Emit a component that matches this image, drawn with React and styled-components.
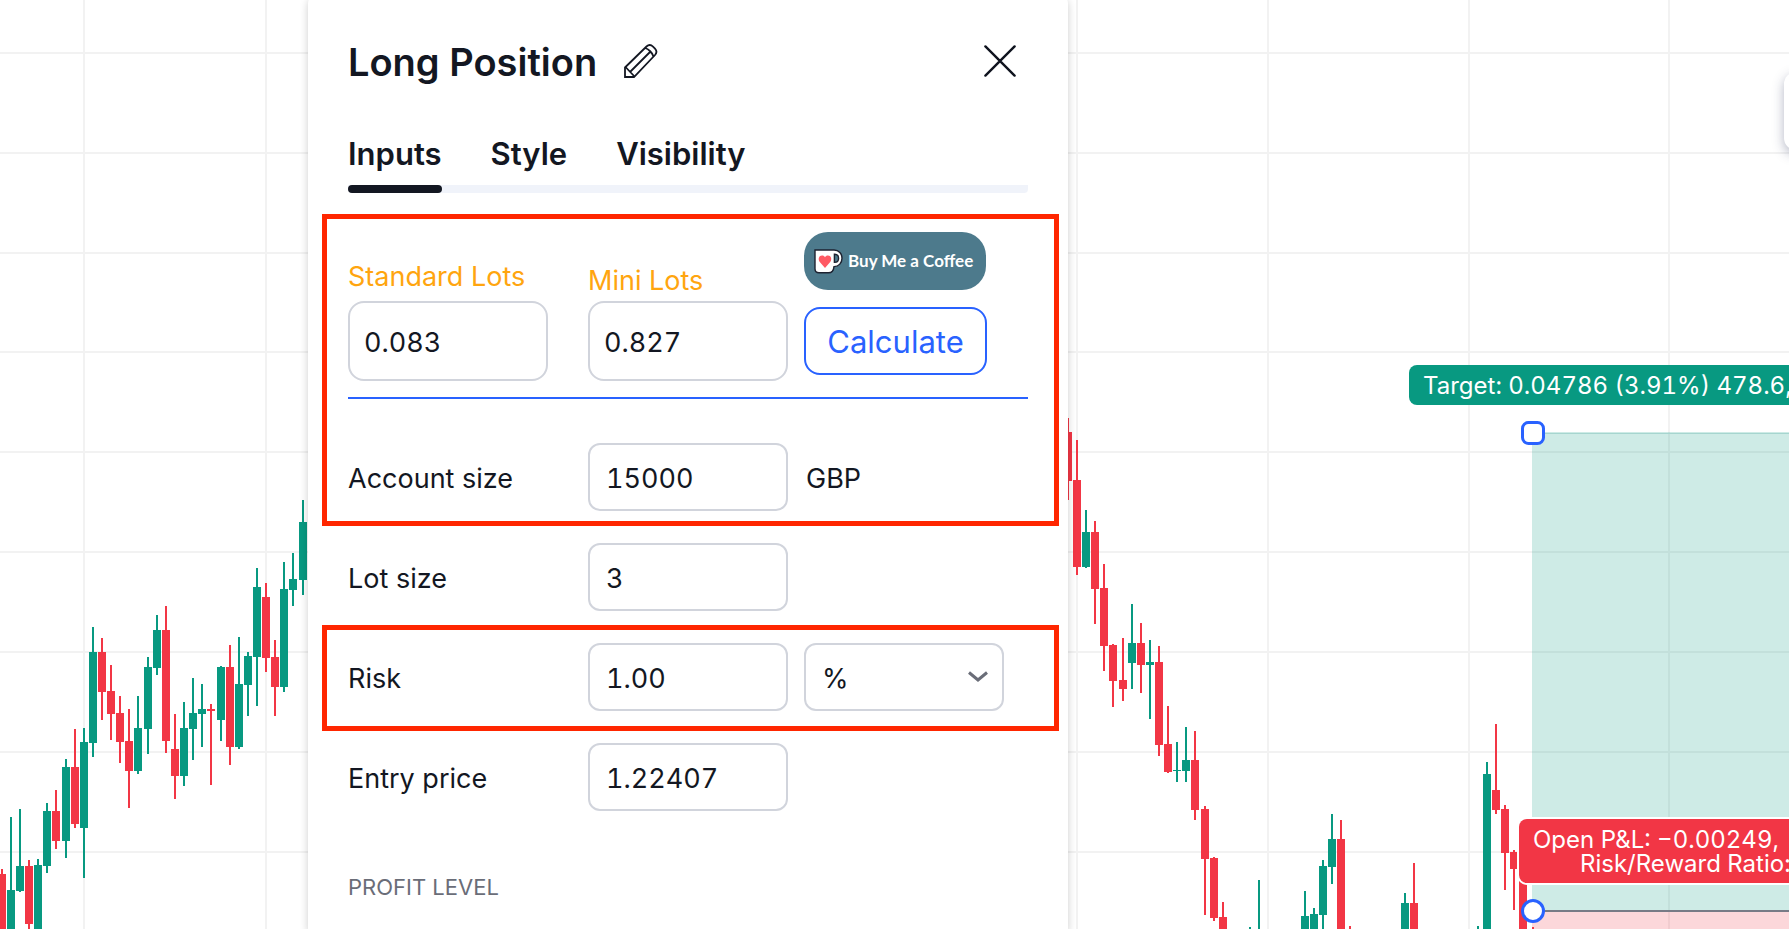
import React, { useState } from "react";
import styled, { createGlobalStyle } from "styled-components";

const color = {
  text: "#131722",
  muted: "#6a6d78",
  border: "#d1d4dc",
  track: "#f0f3fa",
  blue: "#2962ff",
  orange: "#ffa50f",
  up: "#089981",
  down: "#f23645",
  mark: "#ff2600",
  grid: "#f2f2f2",
};

const GlobalStyle = createGlobalStyle`
  *, *::before, *::after { box-sizing: border-box; }
  body {
    margin: 0;
    background: #fff;
    color: ${color.text};
    font-family: Inter, "Liberation Sans", sans-serif;
    font-size: 27px;
    overflow: hidden;
  }
  button, input, select { font: inherit; color: inherit; }
`;

const Workspace = styled.main`
  position: relative;
  min-height: 100vh;
  overflow: hidden;
`;

const ChartCanvas = styled.svg`
  position: absolute;
  inset: 0;
  width: 100%;
  height: 100%;
  display: block;
  shape-rendering: crispEdges;
`;

const PriceTag = styled.div`
  position: absolute;
  left: ${(p) => p.$x}px;
  top: ${(p) => p.$y}px;
  right: 0;
  padding: 9px 0 7px 14px;
  border-radius: 8px 0 0 8px;
  background: ${(p) => p.$tone};
  box-shadow: ${(p) => (p.$outlined ? "0 0 0 2px #fff" : "none")};
  color: #fff;
  font-size: 24px;
  line-height: 24px;
  font-variant-numeric: tabular-nums;
  white-space: nowrap;
  overflow: hidden;
`;

const TagLine = styled.div`
  padding-left: ${(p) => (p.$indent ? 47 : 0)}px;
`;

const FloatingToolbar = styled.div`
  position: absolute;
  left: 1784px;
  top: 72px;
  width: 80px;
  height: 78px;
  border-radius: 12px;
  background: #fff;
  box-shadow: 0 4px 12px rgba(40, 50, 90, 0.35);
`;

const Dialog = styled.section`
  position: absolute;
  left: 308px;
  top: -8px;
  bottom: 0;
  width: 760px;
  padding: 8px 40px 0;
  border-radius: 12px 12px 0 0;
  background: #fff;
  box-shadow: 0 4px 8px rgba(0, 0, 0, 0.2);
`;

const Header = styled.header`
  display: flex;
  align-items: center;
  height: 122px;
`;

const Title = styled.h1`
  margin: 0;
  padding-top: 2px;
  font-size: 38px;
  line-height: 48px;
  font-weight: 600;
`;

const IconButton = styled.button`
  display: flex;
  align-items: center;
  justify-content: center;
  width: 56px;
  height: 56px;
  margin-left: ${(p) => (p.$end ? "auto" : "16px")};
  padding: 0;
  border: 0;
  background: none;
`;

const TabList = styled.div`
  display: flex;
  gap: 49px;
  border-radius: 4px;
  background: linear-gradient(${color.track}, ${color.track}) bottom / 100% 8px no-repeat;
`;

const Tab = styled.button`
  padding: 14px 0 0;
  border: 0;
  background: none;
  font-size: 31px;
  line-height: 36px;
  font-weight: 600;

  &::after {
    content: "";
    display: block;
    height: 8px;
    margin-top: 13px;
    border-radius: 4px;
    background: ${(p) => (p.$active ? color.text : "transparent")};
  }
`;

const Highlight = styled.div`
  margin: ${(p) => p.$gap}px -31px 0 -26px;
  padding: 13px 26px ${(p) => p.$end}px 21px;
  border: 5px solid ${color.mark};
`;

const LotsBar = styled.div`
  display: flex;
  align-items: flex-end;
  padding-bottom: 16px;
  border-bottom: 2px solid ${color.blue};
`;

const LotsField = styled.div`
  display: flex;
  flex-direction: column;
  gap: ${(p) => p.$gap}px;
  width: 200px;
  margin-right: ${(p) => p.$after}px;
`;

const LotsLabel = styled.label`
  color: ${color.orange};
  line-height: 32px;
`;

const Input = styled.input`
  width: 200px;
  height: ${(p) => (p.$tall ? 80 : 68)}px;
  padding: 2px ${(p) => (p.$tall ? 14 : 16)}px 0;
  border: 2px solid ${color.border};
  border-radius: ${(p) => (p.$tall ? 16 : 12)}px;
  background: #fff;
  font-variant-numeric: tabular-nums;
  outline: none;
`;

const LotsActions = styled.div`
  display: flex;
  flex-direction: column;
  gap: 17px;
  padding-bottom: 6px;
`;

const CoffeeLink = styled.a`
  display: flex;
  align-items: center;
  gap: 5px;
  width: 182px;
  height: 58px;
  padding-left: 10px;
  border-radius: 24px;
  background: #4d7a8c;
  color: #fff;
  font-family: Lato, sans-serif;
  font-size: 17px;
  font-weight: 700;
  line-height: 24px;
  text-decoration: none;
  white-space: nowrap;
`;

const CalculateButton = styled.button`
  width: 183px;
  height: 68px;
  padding: 0;
  border: 2px solid ${color.blue};
  border-radius: 16px;
  background: #fff;
  color: ${color.blue};
  font-size: 31px;
`;

const Row = styled.div`
  display: grid;
  grid-template-columns: 240px 200px 1fr;
  align-items: center;
  margin-top: ${(p) => p.$gap || 0}px;
`;

const RowLabel = styled.label`
  padding-top: 2px;
`;

const Unit = styled.span`
  padding: 2px 0 0 18px;
`;

const SelectBox = styled.div`
  position: relative;
  width: 200px;
  margin-left: 16px;

  svg {
    position: absolute;
    right: 15px;
    top: 27px;
    pointer-events: none;
  }
`;

const Select = styled.select`
  display: block;
  width: 100%;
  height: 68px;
  padding: 2px 16px 0;
  border: 2px solid ${color.border};
  border-radius: 12px;
  background: #fff;
  appearance: none;
`;

const SectionTitle = styled.h2`
  margin: 62px 0 0;
  color: ${color.muted};
  font-size: 22px;
  line-height: 28px;
  font-weight: 400;
`;

// Each candle: [centre x, high, body top, body bottom, low, rising?]
const candles = [
  [2, 869, 874, 940, 940, 0], [11, 817, 890, 940, 940, 1], [20, 809, 866, 891, 892, 1],
  [29, 860, 866, 924, 940, 0], [38, 859, 865, 940, 940, 1], [47, 803, 811, 866, 873, 1],
  [56, 790, 811, 841, 849, 0], [66, 759, 767, 841, 858, 1], [75, 729, 767, 824, 828, 0],
  [84, 728, 742, 828, 878, 1], [93, 627, 652, 743, 757, 1], [102, 638, 652, 692, 720, 0],
  [111, 665, 691, 714, 740, 0], [120, 696, 713, 742, 763, 0], [129, 709, 741, 771, 808, 0],
  [138, 696, 728, 771, 774, 1], [148, 657, 667, 729, 754, 1], [157, 615, 630, 668, 675, 1],
  [166, 606, 630, 741, 753, 0], [175, 714, 749, 776, 799, 0], [184, 702, 728, 776, 786, 1],
  [193, 678, 713, 729, 760, 1], [202, 684, 709, 714, 747, 1], [211, 704, 709, 711, 785, 0],
  [221, 666, 667, 720, 741, 1], [230, 645, 667, 747, 765, 0], [239, 637, 684, 747, 749, 1],
  [248, 652, 656, 685, 716, 1], [257, 568, 587, 657, 706, 1], [266, 583, 597, 658, 672, 0],
  [275, 640, 657, 687, 716, 0], [284, 562, 589, 687, 692, 1], [293, 553, 579, 590, 606, 1],
  [303, 500, 522, 580, 595, 1],
  [1068, 418, 432, 481, 500, 0], [1077, 440, 480, 567, 575, 0], [1086, 510, 532, 567, 568, 1],
  [1095, 521, 532, 589, 624, 0], [1104, 564, 588, 646, 671, 0], [1113, 644, 645, 681, 707, 0],
  [1123, 638, 680, 689, 701, 0], [1132, 604, 643, 663, 689, 1], [1141, 623, 643, 665, 693, 0],
  [1150, 640, 662, 665, 719, 1], [1159, 646, 662, 745, 756, 0], [1168, 706, 744, 772, 773, 0],
  [1177, 742, 770, 771, 782, 1], [1186, 727, 760, 771, 782, 1], [1195, 731, 760, 810, 820, 0],
  [1205, 806, 809, 859, 915, 0], [1214, 857, 858, 918, 921, 0], [1223, 902, 917, 940, 940, 0],
  [1250, 927, 935, 940, 940, 1], [1259, 880, 935, 940, 940, 1], [1305, 891, 916, 940, 940, 1],
  [1314, 908, 914, 940, 940, 1], [1323, 860, 866, 915, 940, 1], [1332, 814, 839, 867, 884, 1],
  [1341, 820, 839, 940, 940, 0], [1350, 926, 935, 940, 940, 0], [1405, 893, 903, 940, 940, 1],
  [1414, 863, 903, 940, 940, 0], [1478, 926, 935, 940, 940, 1], [1487, 762, 774, 940, 940, 1],
  [1496, 724, 790, 810, 814, 0], [1505, 805, 809, 853, 890, 0], [1514, 850, 852, 869, 910, 0],
  [1523, 870, 875, 940, 940, 0], [1533, 927, 935, 940, 940, 0],
];

const rowLines = [52, 152, 252, 351, 451, 551, 651, 751, 851];
const columnLines = [83, 265, 1076, 1267, 1468, 1668];

function Chart() {
  return (
    <ChartCanvas aria-label="Price chart" role="img">
      {rowLines.map((y) => (
        <rect key={y} x="0" y={y} width="100%" height="2" fill={color.grid} />
      ))}
      {columnLines.map((x) => (
        <rect key={x} x={x} y="0" width="2" height="100%" fill={color.grid} />
      ))}
      {candles.map(([x, high, top, bottom, low, rising]) => (
        <g key={x} fill={rising ? color.up : color.down}>
          <rect x={x - 1} y={high} width="2" height={low - high} />
          <rect x={x - 4} y={top} width="8" height={bottom - top} />
        </g>
      ))}
      <rect x="1532" y="432" width="100%" height="479" fill={color.up} fillOpacity="0.2" />
      <rect x="1532" y="911" width="100%" height="100%" fill={color.down} fillOpacity="0.2" />
      <rect x="1532" y="433" width="100%" height="1" fill="#a6d5cf" />
      <rect x="1532" y="910" width="100%" height="2" fill="#787b86" />
    </ChartCanvas>
  );
}

const HandleLayer = styled(ChartCanvas)`
  shape-rendering: auto;
  pointer-events: none;
`;

function Handles() {
  return (
    <HandleLayer aria-hidden="true">
      <g fill="#fff" stroke={color.blue} strokeWidth="3">
        <rect x="1522.5" y="422.5" width="21" height="21" rx="6" />
        <circle cx="1533" cy="911" r="10.5" />
      </g>
    </HandleLayer>
  );
}

const PencilIcon = () => (
  <svg width="34" height="34" viewBox="0 0 34 34" fill="none" stroke={color.text} strokeWidth="1.8" aria-hidden="true">
    <path d="M1 33V23.5L22.5 2.5C24.5 .7 27 .7 29 2.6L31 4.6C32.8 6.6 32.8 9 31 11L10 33Z" />
    <path d="M1.5 23L10.5 32.5M6 28L26.5 7.5M21 4C24.5 5 28.5 8.8 29.5 12.5" />
  </svg>
);

const CloseIcon = () => (
  <svg width="32" height="32" viewBox="0 0 32 32" stroke="#0f131e" strokeWidth="2.4" strokeLinecap="round" aria-hidden="true">
    <path d="M1.4 1.4L30.6 30.6M30.6 1.4L1.4 30.6" />
  </svg>
);

const CupIcon = () => (
  <svg width="29" height="25" viewBox="0 0 29 25" aria-hidden="true">
    <path
      d="M1 1H20C25 1 28 4.8 28 9.2C28 14 24.8 17.4 20 17.6C19.6 21.5 17.6 23.8 14.5 23.8H5C2.5 23.8 1 22.3 1 19.8Z"
      fill="#fff"
      stroke="#1d2230"
      strokeWidth="1.4"
    />
    <path d="M20.4 5.2V13.4C23 13.4 24.6 11.6 24.6 9.2C24.6 6.8 23 5.2 20.4 5.2Z" fill="#4d7a8c" stroke="#1d2230" strokeWidth="1.4" />
    <path d="M11 19L5.8 13C3.6 10.2 5 6.5 8 6.5C9.5 6.5 10.4 7.2 11 8.2C11.6 7.2 12.5 6.5 14 6.5C17 6.5 18.4 10.2 16.2 13Z" fill="#ff5a64" />
  </svg>
);

const ChevronIcon = () => (
  <svg width="22" height="14" viewBox="0 0 22 14" fill="none" stroke={color.muted} strokeWidth="3" aria-hidden="true">
    <path d="M2 2.5L11 10L20 2.5" />
  </svg>
);

function NumberRow({ id, label, value, gap, children }) {
  return (
    <Row $gap={gap}>
      <RowLabel htmlFor={id}>{label}</RowLabel>
      <Input id={id} defaultValue={value} />
      {children}
    </Row>
  );
}

const tabs = ["Inputs", "Style", "Visibility"];

export default function App() {
  const [active, setActive] = useState("Inputs");
  return (
    <>
      <GlobalStyle />
      <Workspace>
        <Chart />
        <PriceTag $x={1409} $y={365} $tone={color.up}>
          <TagLine>Target: 0.04786 (3.91%) 478.6,</TagLine>
        </PriceTag>
        <PriceTag $x={1519} $y={819} $tone={color.down} $outlined>
          <TagLine>Open P&amp;L: −0.00249,</TagLine>
          <TagLine $indent>Risk/Reward Ratio:</TagLine>
        </PriceTag>
        <Handles />
        <FloatingToolbar />

        <Dialog role="dialog" aria-labelledby="dialog-title">
          <Header>
            <Title id="dialog-title">Long Position</Title>
            <IconButton aria-label="Rename">
              <PencilIcon />
            </IconButton>
            <IconButton aria-label="Close" $end>
              <CloseIcon />
            </IconButton>
          </Header>

          <TabList role="tablist">
            {tabs.map((name) => (
              <Tab
                key={name}
                role="tab"
                aria-selected={active === name}
                $active={active === name}
                onClick={() => setActive(name)}
              >
                {name}
              </Tab>
            ))}
          </TabList>

          <Highlight $gap={21} $end={10}>
            <LotsBar>
              <LotsField $gap={8} $after={40}>
                <LotsLabel htmlFor="standard-lots">Standard Lots</LotsLabel>
                <Input id="standard-lots" defaultValue="0.083" $tall />
              </LotsField>
              <LotsField $gap={4} $after={16}>
                <LotsLabel htmlFor="mini-lots">Mini Lots</LotsLabel>
                <Input id="mini-lots" defaultValue="0.827" $tall />
              </LotsField>
              <LotsActions>
                <CoffeeLink href="#coffee">
                  <CupIcon />
                  Buy Me a Coffee
                </CoffeeLink>
                <CalculateButton>Calculate</CalculateButton>
              </LotsActions>
            </LotsBar>
            <NumberRow id="account-size" label="Account size" value="15000" gap={44}>
              <Unit>GBP</Unit>
            </NumberRow>
          </Highlight>

          <NumberRow id="lot-size" label="Lot size" value="3" gap={17} />

          <Highlight $gap={14} $end={15}>
            <NumberRow id="risk" label="Risk" value="1.00">
              <SelectBox>
                <Select aria-label="Risk unit" defaultValue="%">
                  <option>%</option>
                  <option>GBP</option>
                </Select>
                <ChevronIcon />
              </SelectBox>
            </NumberRow>
          </Highlight>

          <NumberRow id="entry-price" label="Entry price" value="1.22407" gap={12} />

          <SectionTitle>PROFIT LEVEL</SectionTitle>
        </Dialog>
      </Workspace>
    </>
  );
}
